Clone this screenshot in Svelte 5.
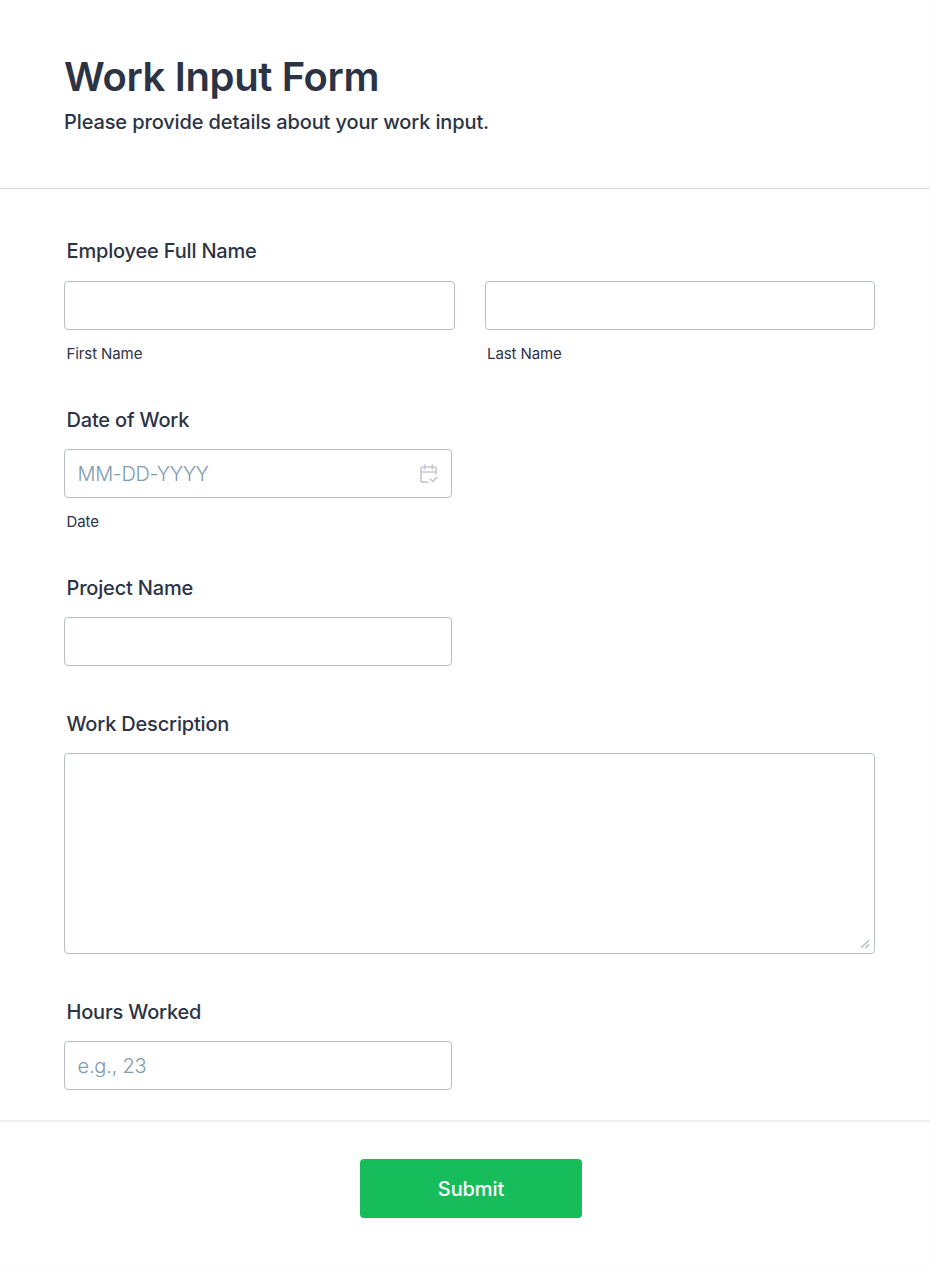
<script>
	let firstName = '';
	let lastName = '';
	let workDate = '';
	let project = '';
	let description = '';
	let hours = '';
</script>

<form class="form" on:submit|preventDefault>
	<header class="header">
		<h1>Work Input Form</h1>
		<p>Please provide details about your work input.</p>
	</header>

	<div class="fields">
		<div class="field name-field">
			<label class="label" for="first">Employee Full Name</label>
			<div class="name-row">
				<div>
					<input id="first" class="full" type="text" bind:value={firstName} />
					<label class="sublabel" for="first">First Name</label>
				</div>
				<div>
					<input id="last" class="full" type="text" bind:value={lastName} />
					<label class="sublabel" for="last">Last Name</label>
				</div>
			</div>
		</div>

		<div class="field date-field">
			<label class="label" for="date">Date of Work</label>
			<div class="date-wrap">
				<input id="date" type="text" placeholder="MM-DD-YYYY" bind:value={workDate} />
				<svg class="calendar" width="20" height="20" viewBox="0 0 20 20" fill="none" aria-hidden="true">
					<path d="M17.2 9.5V5a2 2 0 0 0-2-2H4a2 2 0 0 0-2 2v11.2a2 2 0 0 0 2 2h4.5M2 8h15.2M6 1v4M13.3 1v4M11.5 15.2l2.3 2.2 4-4.1" stroke="currentColor" stroke-width="1.7" stroke-linecap="round" stroke-linejoin="round" />
				</svg>
			</div>
			<label class="sublabel" for="date">Date</label>
		</div>

		<div class="field project-field">
			<label class="label" for="project">Project Name</label>
			<input id="project" type="text" bind:value={project} />
		</div>

		<div class="field description-field">
			<label class="label" for="description">Work Description</label>
			<div class="area-wrap">
				<textarea id="description" bind:value={description}></textarea>
				<svg class="grip" width="10" height="10" viewBox="0 0 10 10" fill="none" aria-hidden="true">
					<path d="M1 9l8-8M5.5 9L9 5.5" stroke="#b3b6bd" stroke-width="1.2" />
				</svg>
			</div>
		</div>

		<div class="field">
			<label class="label" for="hours">Hours Worked</label>
			<input id="hours" type="text" placeholder="e.g., 23" bind:value={hours} />
		</div>
	</div>

	<footer class="footer">
		<button type="submit">Submit</button>
	</footer>
</form>

<style>
	:global(body) {
		background: #fff;
	}
	.form {
		box-sizing: border-box;
		height: 1268px;
		overflow: hidden;
		font-family: Inter, sans-serif;
		color: #2c3345;
		box-shadow: inset -1px -1px #fafafa;
	}
	.header {
		box-sizing: border-box;
		height: 189px;
		padding: 52px 64px 0;
		border-bottom: 1px solid #d7d8e6;
	}
	h1 {
		margin: 0;
		font-size: 40px;
		line-height: 50px;
		font-weight: 600;
		letter-spacing: -0.36px;
	}
	p {
		margin: 8px 0 0;
		font-size: 20px;
		line-height: 24px;
		font-weight: 500;
		letter-spacing: -0.12px;
	}
	.fields {
		box-sizing: border-box;
		height: 933px;
		padding: 50px 55px 0 64px;
		border-bottom: 2px solid #eeeef3;
	}
	.name-field { height: 169px; }
	.date-field { height: 168px; }
	.project-field { height: 136px; }
	.description-field { height: 288px; }
	.label {
		display: block;
		padding-left: 2.5px;
		margin-bottom: 17px;
		font-size: 20px;
		line-height: 24px;
		font-weight: 500;
		letter-spacing: -0.18px;
	}
	.name-field .label { margin-bottom: 18px; }
	.name-row {
		display: grid;
		grid-template-columns: 1fr 1fr;
		gap: 30px;
	}
	input,
	textarea {
		display: block;
		box-sizing: border-box;
		width: 388px;
		height: 49px;
		margin: 0;
		padding: 0 12.5px;
		border: 1px solid #b8bdc9;
		border-radius: 4px;
		background: #fff;
		color: #2c3345;
		font: 300 20px Inter, sans-serif;
	}
	input.full { width: 100%; }
	input::placeholder {
		color: #7d9bb0;
		opacity: 1;
		letter-spacing: -0.35px;
	}
	#hours::placeholder { letter-spacing: -0.2px; }
	.sublabel {
		display: block;
		padding: 15px 0 0 2.5px;
		font-size: 15px;
		line-height: 18px;
		letter-spacing: -0.1px;
	}
	.date-wrap {
		position: relative;
		width: 388px;
	}
	.calendar {
		position: absolute;
		top: 15px;
		right: 13px;
		color: #c8c8d4;
	}
	.area-wrap { position: relative; }
	textarea {
		width: 100%;
		height: 201px;
		padding: 12px 13px;
		resize: none;
	}
	.grip {
		position: absolute;
		right: 5px;
		bottom: 5px;
	}
	.footer {
		display: flex;
		justify-content: center;
		padding: 37px 0 0 12px;
	}
	button {
		width: 222px;
		height: 59px;
		padding: 0;
		border: 0;
		border-radius: 4px;
		background: #18bd5b;
		color: #fff;
		font: 500 20px Inter, sans-serif;
		letter-spacing: -0.1px;
		cursor: pointer;
	}
</style>
